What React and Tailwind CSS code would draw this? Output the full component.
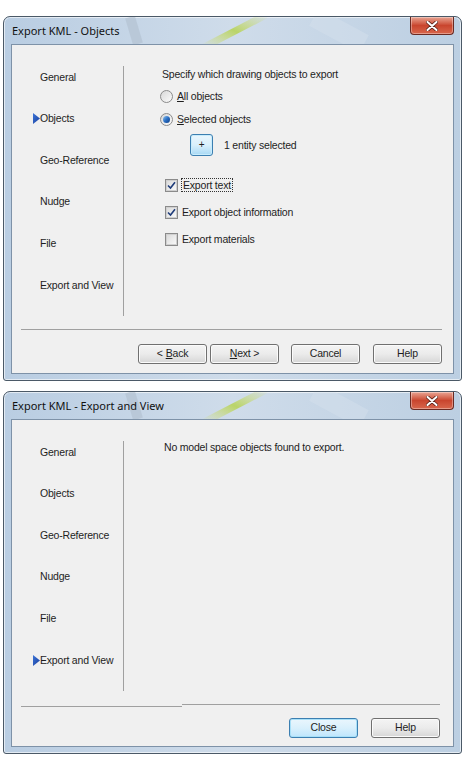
import React from "react";

function Arrow() {
  return (
    <svg width="7" height="11" viewBox="0 0 7 11" className="absolute left-[-7px] top-[0px]">
      <defs>
        <linearGradient id="ag" x1="0" y1="0" x2="1" y2="1">
          <stop offset="0" stopColor="#3b74d8" />
          <stop offset="1" stopColor="#1a3f9c" />
        </linearGradient>
      </defs>
      <path d="M0 0 L7 5.5 L0 11 Z" fill="url(#ag)" />
    </svg>
  );
}

function NavItem({ label, active }) {
  return (
    <div className="h-[41.6px] flex items-center pl-[28px]">
      <span className="relative text-[10.5px] tracking-[-0.2px] text-[#1e1e1e] leading-none">
        {active && <Arrow />}
        {label}
      </span>
    </div>
  );
}

function Nav({ active }) {
  const items = ["General", "Objects", "Geo-Reference", "Nudge", "File", "Export and View"];
  return (
    <div className="relative w-[112px] shrink-0 pt-[11px]">
      {items.map((l) => (
        <NavItem key={l} label={l} active={l === active} />
      ))}
      <div className="absolute right-0 top-[21px] h-[250px] w-px bg-[#a0a0a0]" />
    </div>
  );
}

function Btn({ children, w = "w-[69px]", primary }) {
  return (
    <div
      className={
        "h-[20px] " +
        w +
        " rounded-[3px] border flex items-center justify-center text-[10.5px] tracking-[-0.2px] text-[#1e1e1e] " +
        (primary
          ? "border-[#3c7fb1] bg-gradient-to-b from-[#eaf6fd] via-[#d9f0fc] to-[#bee6fd] shadow-[inset_0_0_0_1px_#a8e0f8]"
          : "border-[#707070] bg-gradient-to-b from-[#f4f4f4] via-[#ebebeb] to-[#d6d6d6] shadow-[inset_0_0_0_1px_#fbfbfb]")
      }
    >
      {children}
    </div>
  );
}

function Radio({ checked }) {
  return (
    <div className="w-[13px] h-[13px] rounded-full border border-[#8b8b8b] bg-gradient-to-br from-[#d8d8d8] to-[#fbfbfb] flex items-center justify-center">
      {checked && (
        <div className="w-[7px] h-[7px] rounded-full bg-gradient-to-br from-[#8ec4ef] via-[#2a6fc4] to-[#0f3e86]" />
      )}
    </div>
  );
}

function Check({ checked }) {
  return (
    <div className="w-[13px] h-[13px] border border-[#8b8b8b] bg-white flex items-center justify-center">
      <div className="w-[11px] h-[11px] border border-[#d0d0d0] bg-gradient-to-br from-[#dcdcdc] to-[#f8f8f8] flex items-center justify-center">
        {checked && (
          <svg width="9" height="9" viewBox="0 0 9 9">
            <path d="M1 4.5 L3.5 7 L8 1.2" fill="none" stroke="#1f3c7a" strokeWidth="1.6" />
          </svg>
        )}
      </div>
    </div>
  );
}

function TitleBar({ title }) {
  return (
    <div className="relative h-[27px] flex items-center pl-[8px] overflow-hidden">
      <svg className="absolute left-0 top-0" width="459" height="27" viewBox="0 0 459 27">
        <defs>
          <linearGradient id="gl" x1="0" y1="1" x2="1" y2="0">
            <stop offset="0" stopColor="#d4e066" stopOpacity="0.0" />
            <stop offset="0.5" stopColor="#b7d35a" stopOpacity="0.9" />
            <stop offset="1" stopColor="#d4e066" stopOpacity="0.0" />
          </linearGradient>
        </defs>
        <path d="M200 30 L262 -2" stroke="url(#gl)" strokeWidth="7" />
        <path d="M126 0 L134 27" stroke="#aebccb" strokeWidth="10" opacity="0.5" />
        <path d="M310 0 L360 27" stroke="#d8e3ee" strokeWidth="20" opacity="0.4" />
      </svg>
      <span className="relative text-[11px] text-[#111] font-['Noto_Sans','Open_Sans',sans-serif] leading-none">
        {title}
      </span>
      <div className="absolute right-[7px] top-0 w-[44px] h-[18px] rounded-b-[4px] border border-t-0 border-[#6a2a22] bg-gradient-to-b from-[#e8a493] via-[#c9452e] to-[#d8664c] flex items-center justify-center shadow-[inset_0_0_0_1px_rgba(255,255,255,0.35)]">
        <svg width="12" height="10" viewBox="0 0 12 10">
          <path d="M1.5 1 L10.5 9 M10.5 1 L1.5 9" stroke="#5a2218" strokeWidth="3.6" strokeLinecap="round" />
          <path d="M1.5 1 L10.5 9 M10.5 1 L1.5 9" stroke="#ffffff" strokeWidth="2" strokeLinecap="round" />
        </svg>
      </div>
    </div>
  );
}

function Window({ title, height, children, footer }) {
  return (
    <div
      className={
        "relative w-[459px] rounded-t-[7px] rounded-b-[3px] border border-[#4b5967] bg-gradient-to-r from-[#b9cde2] via-[#cfdcea] to-[#bccfe2] shadow-[inset_0_0_0_1px_rgba(255,255,255,0.6)] flex flex-col " +
        height
      }
    >
      <TitleBar title={title} />
      <div className="flex-1 mx-[7px] mb-[6px] border border-[#7e92a8] bg-[#f0f0f0] flex flex-col font-['Liberation_Sans',Arial,sans-serif]">
        <div className="h-[284px] flex">{children}</div>
        {footer}
      </div>
    </div>
  );
}

export default function App() {
  return (
    <div className="w-[474px] h-[760px] bg-white pt-[16px] pl-[3px] flex flex-col gap-[10px]">
      <Window
        title="Export KML - Objects"
        height="h-[365px]"
        footer={
          <>
            <div className="ml-[9px] mr-[11px] h-px bg-[#a0a0a0]" />
            <div className="flex justify-end mr-[11px] mt-[14px]">
              <Btn>
                &lt; <span className="underline ml-[3px]">B</span>ack
              </Btn>
              <div className="w-[3px]" />
              <Btn>
                <span className="underline">N</span>ext &gt;
              </Btn>
              <div className="w-[12px]" />
              <Btn>Cancel</Btn>
              <div className="w-[13px]" />
              <Btn>Help</Btn>
            </div>
          </>
        }
      >
        <Nav active="Objects" />
        <div className="flex flex-col pl-[38px] pt-[22px] text-[10.5px] tracking-[-0.2px] text-[#1e1e1e] leading-none">
          <div className="h-[14px] flex items-center">Specify which drawing objects to export</div>
          <div className="mt-[8px] h-[14px] flex items-center gap-[4px] -ml-[2px]">
            <Radio />
            <span>
              <span className="underline">A</span>ll objects
            </span>
          </div>
          <div className="mt-[9px] h-[14px] flex items-center gap-[4px] -ml-[2px]">
            <Radio checked />
            <span>
              <span className="underline">S</span>elected objects
            </span>
          </div>
          <div className="mt-[8px] flex items-center ml-[28px]">
            <div className="w-[23px] h-[22px] rounded-[3px] border border-[#3c7fb1] bg-gradient-to-b from-[#eaf6fd] via-[#d9f0fc] to-[#a7d9f5] flex items-center justify-center text-[10px] shadow-[inset_0_0_0_1px_#c8ecfc]">
              +
            </div>
            <span className="ml-[11px]">1 entity selected</span>
          </div>
          <div className="mt-[22px] h-[14px] flex items-center gap-[3px] ml-[3px]">
            <Check checked />
            <span className="border border-dotted border-[#333] px-[1px] py-[1px]">Export text</span>
          </div>
          <div className="mt-[13px] h-[14px] flex items-center gap-[4px] ml-[3px]">
            <Check checked />
            <span>Export object information</span>
          </div>
          <div className="mt-[13px] h-[14px] flex items-center gap-[4px] ml-[3px]">
            <Check />
            <span>Export materials</span>
          </div>
        </div>
      </Window>
      <Window
        title="Export KML - Export and View"
        height="h-[363px]"
        footer={
          <>
            <div className="flex ml-[9px] mr-[13px] h-[3px]">
              <div className="w-[161px] mt-[2px] h-px bg-[#a0a0a0]" />
              <div className="flex-1 h-px bg-[#a0a0a0]" />
            </div>
            <div className="flex justify-end mr-[13px] mt-[11px]">
              <Btn primary>Close</Btn>
              <div className="w-[13px]" />
              <Btn>Help</Btn>
            </div>
          </>
        }
      >
        <Nav active="Export and View" />
        <div className="pl-[40px] pt-[22px] text-[10.5px] tracking-[-0.2px] text-[#1e1e1e] leading-none">
          No model space objects found to export.
        </div>
      </Window>
    </div>
  );
}
